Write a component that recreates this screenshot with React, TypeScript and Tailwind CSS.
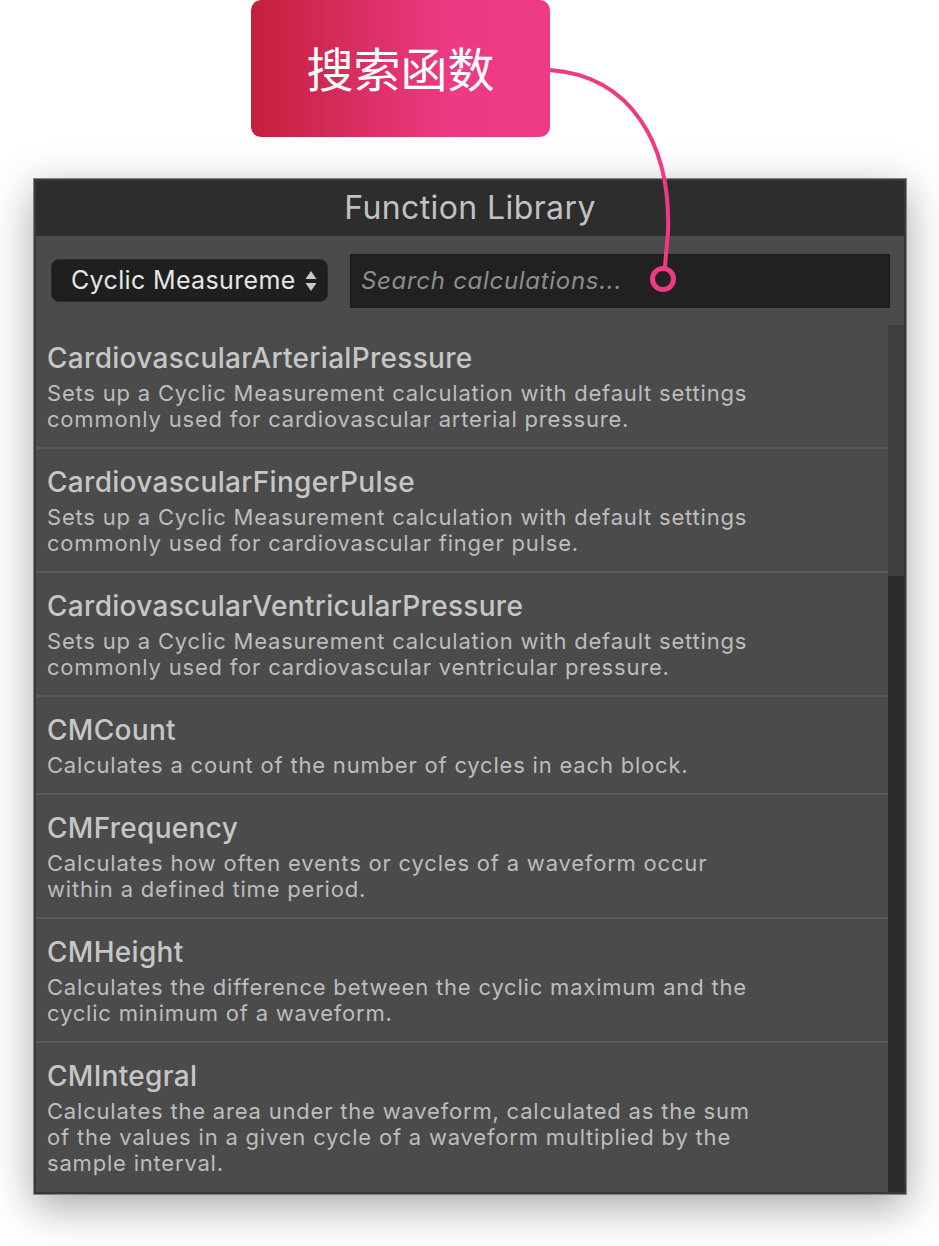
import React from "react";

const rows: { title: string; lines: string[] }[] = [
  {
    title: "CardiovascularArterialPressure",
    lines: [
      "Sets up a Cyclic Measurement calculation with default settings",
      "commonly used for cardiovascular arterial pressure.",
    ],
  },
  {
    title: "CardiovascularFingerPulse",
    lines: [
      "Sets up a Cyclic Measurement calculation with default settings",
      "commonly used for cardiovascular finger pulse.",
    ],
  },
  {
    title: "CardiovascularVentricularPressure",
    lines: [
      "Sets up a Cyclic Measurement calculation with default settings",
      "commonly used for cardiovascular ventricular pressure.",
    ],
  },
  {
    title: "CMCount",
    lines: ["Calculates a count of the number of cycles in each block."],
  },
  {
    title: "CMFrequency",
    lines: [
      "Calculates how often events or cycles of a waveform occur",
      "within a defined time period.",
    ],
  },
  {
    title: "CMHeight",
    lines: [
      "Calculates the difference between the cyclic maximum and the",
      "cyclic minimum of a waveform.",
    ],
  },
  {
    title: "CMIntegral",
    lines: [
      "Calculates the area under the waveform, calculated as the sum",
      "of the values in a given cycle of a waveform multiplied by the",
      "sample interval.",
    ],
  },
];

export default function App() {
  return (
    <div
      className="relative w-[939px] h-[1246px] bg-white overflow-hidden"
      style={{ fontFamily: "Inter, 'Noto Sans', sans-serif" }}
    >
      {/* Callout */}
      <div className="pl-[251px]">
        <div className="w-[299px] h-[137px] rounded-[10px] bg-[linear-gradient(90deg,#c41f3b_0%,#dc3066_40%,#ee3a84_68%,#ef3b86_100%)] flex items-center justify-center pb-[4px]">
          <span
            className="text-white text-[47px] leading-none"
            style={{ fontFamily: "'Noto Sans CJK SC', sans-serif" }}
          >
            搜索函数
          </span>
        </div>
      </div>

      {/* Panel */}
      <div className="ml-[33px] mt-[41px] w-[874px] h-[1017px] border border-[#858585] shadow-[0_12px_40px_rgba(0,0,0,0.35)]">
        <div className="w-full h-full border-2 border-[#383838] bg-[#4b4b4b] flex flex-col overflow-hidden">
          {/* Title bar */}
          <div className="h-[55px] shrink-0 bg-[#2d2d2d] flex items-center justify-center pb-[2px]">
            <span className="text-[#c2c2c2] text-[32px] tracking-[0.4px]">Function Library</span>
          </div>
          {/* Toolbar */}
          <div className="h-[89px] shrink-0 flex items-center pl-[15px] pr-[14px]">
            <div className="w-[277px] h-[43px] rounded-[8px] bg-[#1f1f1f] border border-[#2a2a2a] flex items-center pl-[19px] pr-[10px]">
              <span className="text-[#e6e6e6] text-[25px] tracking-[0.35px] whitespace-nowrap flex-1 overflow-hidden">
                Cyclic Measureme
              </span>
              <svg width="12" height="28" viewBox="0 0 12 28" className="ml-[2px]">
                <path d="M6 4 L11.5 12 L0.5 12 Z" fill="#c8c8c8" />
                <path d="M0.5 16 L11.5 16 L6 24 Z" fill="#c8c8c8" />
              </svg>
            </div>
            <div className="ml-[22px] flex-1 h-[54px] bg-[#212121] border border-[#1b1b1b] flex items-center pl-[10px]">
              <span className="text-[#8d8d8d] text-[24px] tracking-[0.7px] italic whitespace-nowrap">
                Search calculations...
              </span>
            </div>
          </div>
          {/* List */}
          <div className="flex flex-1 min-h-0">
            <div className="flex-1 flex flex-col">
              {rows.map((r) => (
                <div
                  key={r.title}
                  className="pl-[11px] pt-[17px] pb-[15px] border-b-2 border-[#5b5b5b] last:border-b-0"
                >
                  <div className="text-[#c6c6c6] text-[28px] leading-[32px] font-medium whitespace-nowrap tracking-[0.3px]">
                    {r.title}
                  </div>
                  <div className="mt-[6px] text-[#bdbdbd] text-[22px] leading-[26px] tracking-[0.8px] whitespace-nowrap">
                    {r.lines.map((l) => (
                      <div key={l}>{l}</div>
                    ))}
                  </div>
                </div>
              ))}
            </div>
            <div className="w-[16px] shrink-0 flex flex-col bg-[#2b2b2b]">
              <div className="h-[251px] bg-[#3f3f3f]" />
            </div>
          </div>
        </div>
      </div>

      {/* Connector */}
      <svg
        className="absolute left-0 top-0 pointer-events-none"
        width="939"
        height="1246"
        viewBox="0 0 939 1246"
      >
        <path
          d="M 550 70 C 632 76, 671 145, 668 232 L 665 266"
          fill="none"
          stroke="#ec3b82"
          strokeWidth="4"
          strokeLinecap="round"
        />
        <circle cx="663" cy="279" r="10.5" fill="none" stroke="#ec3b82" strokeWidth="5" />
      </svg>
    </div>
  );
}
